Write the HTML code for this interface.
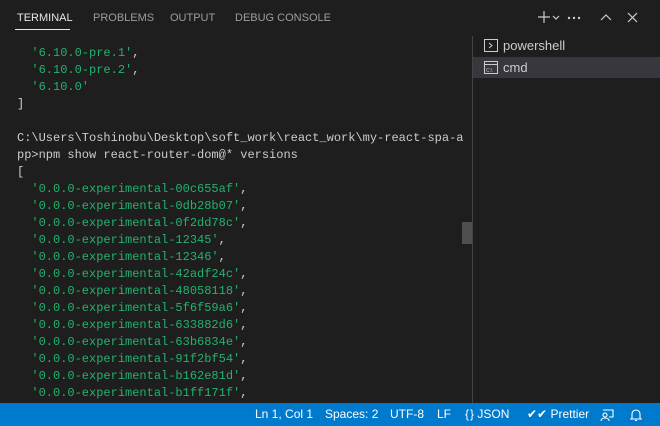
<!DOCTYPE html>
<html><head><style>
*{margin:0;padding:0;box-sizing:border-box}
body{width:660px;height:426px;background:#1e1e1e;overflow:hidden;position:relative;font-family:"Liberation Sans",sans-serif}
.tabs{position:absolute;top:0;left:0;width:660px;height:36px;font-size:11px;color:#9d9d9d}
.tabs span{position:absolute;top:12px}
.tabs .act{color:#e7e7e7}
.ul{position:absolute;left:15px;top:29px;width:55px;height:1px;background:#e7e7e7}
.term{position:absolute;left:17px;top:45px;font-family:"Liberation Mono",monospace;font-size:12px;line-height:17px;color:#cccccc;white-space:pre}
.g{color:#23b26d}
.div{position:absolute;left:472px;top:36px;width:1px;height:367px;background:#444}
.thumb{position:absolute;left:462px;top:222px;width:10px;height:22px;background:#4f4f4f}
.row{position:absolute;left:473px;width:187px;height:21px;font-size:13px;color:#cccccc}
.row span{position:absolute;left:30px;top:3px}
.status{position:absolute;left:0;top:403px;width:660px;height:23px;background:#007acc;color:#fff;font-size:12px}
.status span{position:absolute;top:4px}
.ic{position:absolute}
</style></head><body>
<div class="tabs">
<span class="act" style="left:17px">TERMINAL</span>
<span style="left:93px">PROBLEMS</span>
<span style="left:170px">OUTPUT</span>
<span style="left:235px">DEBUG CONSOLE</span>
<div class="ul"></div>
<svg class="ic" style="left:536px;top:9px" width="120" height="18" viewBox="0 0 120 18" fill="none" stroke="#ccc" stroke-width="1.2">
<path d="M2 8h12M8 2v12"/><path d="M17 7l3 3 3-3"/>
<circle cx="33" cy="9" r=".6" fill="#ccc"/><circle cx="38" cy="9" r=".6" fill="#ccc"/><circle cx="43" cy="9" r=".6" fill="#ccc"/>
<path d="M65 11l5-5 5 5"/><path d="M92 4l9 9M101 4l-9 9"/>
</svg>
</div>
<div class="term"><span class="g">  '6.10.0-pre.1'</span>,
<span class="g">  '6.10.0-pre.2'</span>,
<span class="g">  '6.10.0'</span>
]

C:\Users\Toshinobu\Desktop\soft_work\react_work\my-react-spa-a
pp&gt;npm show react-router-dom@* versions
[
<span class="g">  '0.0.0-experimental-00c655af'</span>,
<span class="g">  '0.0.0-experimental-0db28b07'</span>,
<span class="g">  '0.0.0-experimental-0f2dd78c'</span>,
<span class="g">  '0.0.0-experimental-12345'</span>,
<span class="g">  '0.0.0-experimental-12346'</span>,
<span class="g">  '0.0.0-experimental-42adf24c'</span>,
<span class="g">  '0.0.0-experimental-48058118'</span>,
<span class="g">  '0.0.0-experimental-5f6f59a6'</span>,
<span class="g">  '0.0.0-experimental-633882d6'</span>,
<span class="g">  '0.0.0-experimental-63b6834e'</span>,
<span class="g">  '0.0.0-experimental-91f2bf54'</span>,
<span class="g">  '0.0.0-experimental-b162e81d'</span>,
<span class="g">  '0.0.0-experimental-b1ff171f'</span>,</div>
<div class="div"></div>
<div class="thumb"></div>
<div class="row" style="top:35px"><svg class="ic" style="left:10px;top:3px" width="16" height="15" fill="none" stroke="#ccc"><rect x="1.5" y="1.5" width="13" height="12"/><path d="M6 5l3 2.5-3 2.5"/></svg><span>powershell</span></div>
<div class="row" style="top:57px;background:#37373d"><svg class="ic" style="left:10px;top:3px" width="16" height="15" fill="none" stroke="#ccc"><rect x="1.5" y="1.5" width="13" height="12"/><path d="M1.5 4.5h13"/><text x="3" y="12" font-size="5" fill="#ccc" stroke="none" font-family="Liberation Sans">C:\</text></svg><span>cmd</span></div>
<div class="status">
<span style="left:255px">Ln 1, Col 1</span>
<span style="left:325px">Spaces: 2</span>
<span style="left:390px">UTF-8</span>
<span style="left:437px">LF</span>
<span style="left:465px">{&#8202;} JSON</span>
<span style="left:527px">✔✔ Prettier</span>
<svg class="ic" style="left:600px;top:4px" width="16" height="15" fill="none" stroke="#fff" stroke-width="1.1"><path d="M3 3h10v7h-4"/><circle cx="5" cy="8" r="2"/><path d="M1 14c0-2 2-3 4-3s4 1 4 3"/></svg>
<svg class="ic" style="left:628px;top:4px" width="16" height="15" fill="none" stroke="#fff" stroke-width="1.1"><path d="M4 11V7a4 4 0 0 1 8 0v4l1 1H3z"/><path d="M7 13.5h2"/></svg>
</div>
</body></html>
